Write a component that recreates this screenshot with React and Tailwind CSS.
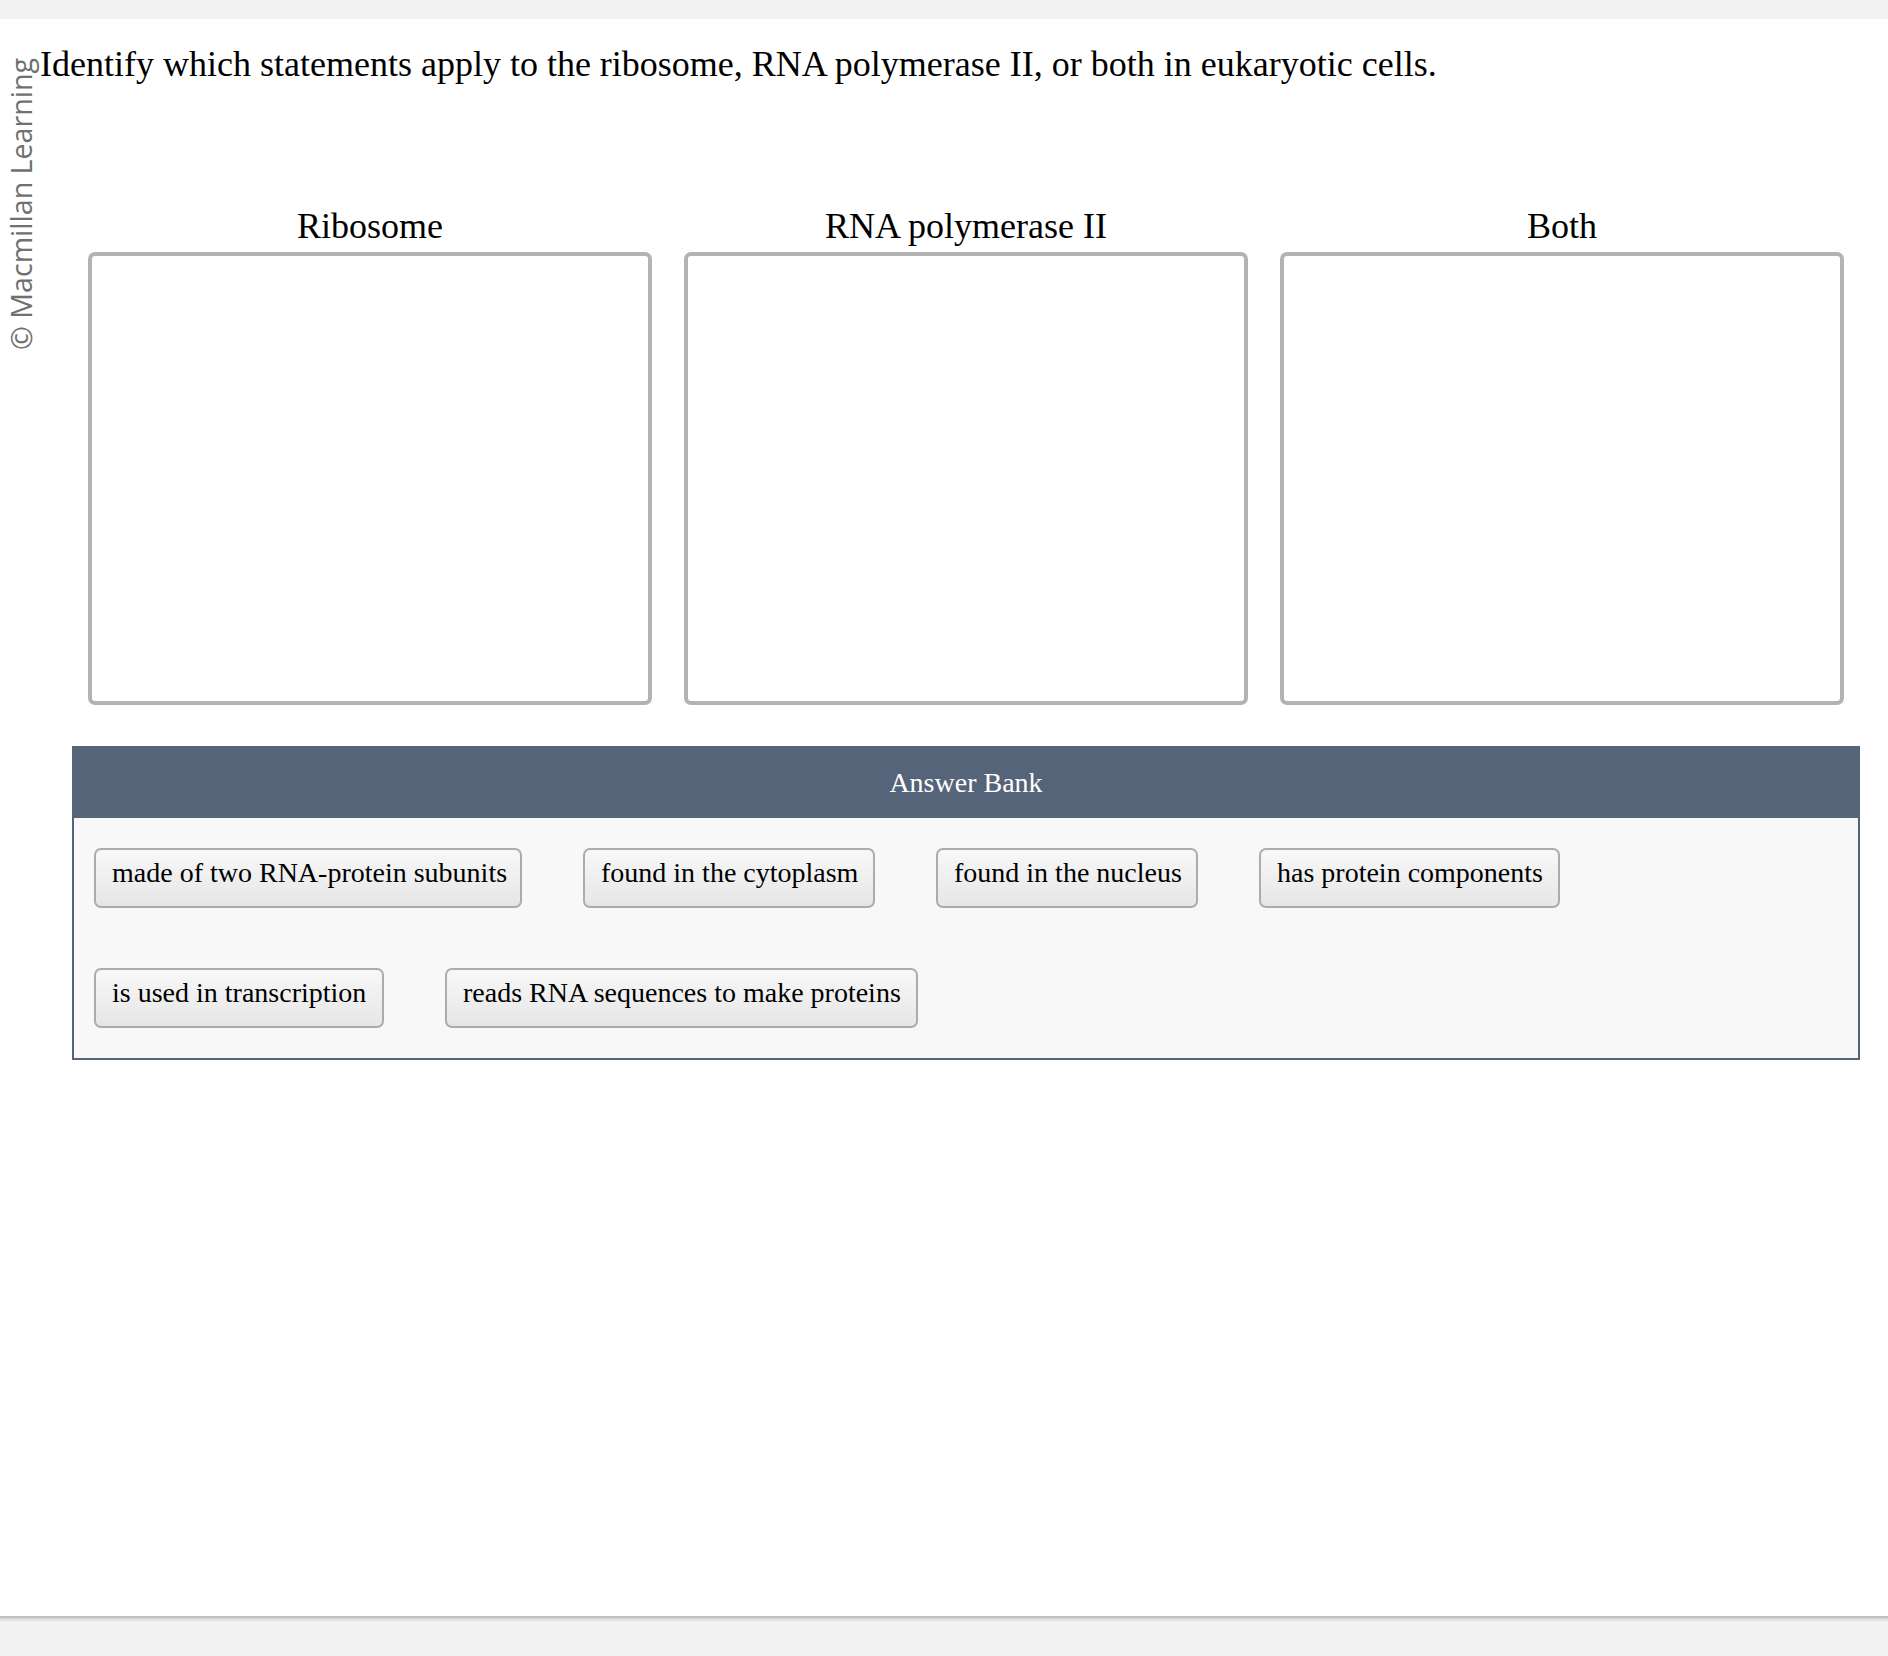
const columns = ['Ribosome', 'RNA polymerase II', 'Both']

const rows = [
  [
    { label: 'made of two RNA-protein subunits', width: 'w-[428px]' },
    { label: 'found in the cytoplasm', width: 'w-[292px]' },
    { label: 'found in the nucleus', width: 'w-[262px]' },
    { label: 'has protein components', width: 'w-[301px]' },
  ],
  [
    { label: 'is used in transcription', width: 'w-[290px]' },
    { label: 'reads RNA sequences to make proteins', width: 'w-[473px]' },
  ],
]

export default function App() {
  return (
    <div className="relative flex h-[1656px] w-[1888px] flex-col overflow-hidden bg-white font-['Liberation_Serif',serif] text-black">
      <div className="h-[19px] shrink-0 bg-[#f2f2f2]" />

      {/* Copyright runs up the left edge, over the question */}
      <div className="absolute top-[58px] left-[7px] rotate-180 font-['Open_Sans',sans-serif] text-[28.6px] leading-[28px] font-medium whitespace-nowrap text-[#707070] [text-orientation:sideways] [writing-mode:vertical-rl]">
        © Macmillan Learning
      </div>

      <div className="flex-1">
        <p className="mt-[25px] ml-[40px] text-[36px] leading-[40px]">
          Identify which statements apply to the ribosome, RNA polymerase II, or both in eukaryotic cells.
        </p>

        <div className="mt-[122px] ml-[88px] flex w-[1756px] gap-[32px]">
          {columns.map((title) => (
            <div key={title} className="flex-1">
              <h2 className="text-center text-[36px] leading-[40px]">{title}</h2>
              <div className="mt-[6px] h-[453px] rounded-[7px] border-[4px] border-[#b3b3b3]" />
            </div>
          ))}
        </div>

        <div className="mt-[41px] ml-[72px] w-[1788px] border-2 border-[#556479] bg-[#f8f8f8]">
          <div className="flex h-[70px] items-center justify-center bg-[#556479] text-[28px] text-white">
            Answer Bank
          </div>
          <div className="flex flex-col gap-[60px] px-[20px] pt-[30px] pb-[30px]">
            {rows.map((row, i) => (
              <div key={i} className="flex gap-[61px]">
                {row.map((chip) => (
                  <div
                    key={chip.label}
                    className={`${chip.width} h-[60px] rounded-[7px] border-2 border-[#acacac] bg-gradient-to-b from-[#f8f8f8] to-[#e6e6e6] pt-[5px] pl-[16px] text-[28px] leading-[36px] whitespace-nowrap`}
                  >
                    {chip.label}
                  </div>
                ))}
              </div>
            ))}
          </div>
        </div>
      </div>

      <div className="h-[40px] shrink-0 border-t-[2px] border-[#bfbfbf] bg-[#f2f2f2]">
        <div className="h-[4px] bg-gradient-to-b from-[#d4d4d4] to-[#f2f2f2]" />
      </div>
    </div>
  )
}
